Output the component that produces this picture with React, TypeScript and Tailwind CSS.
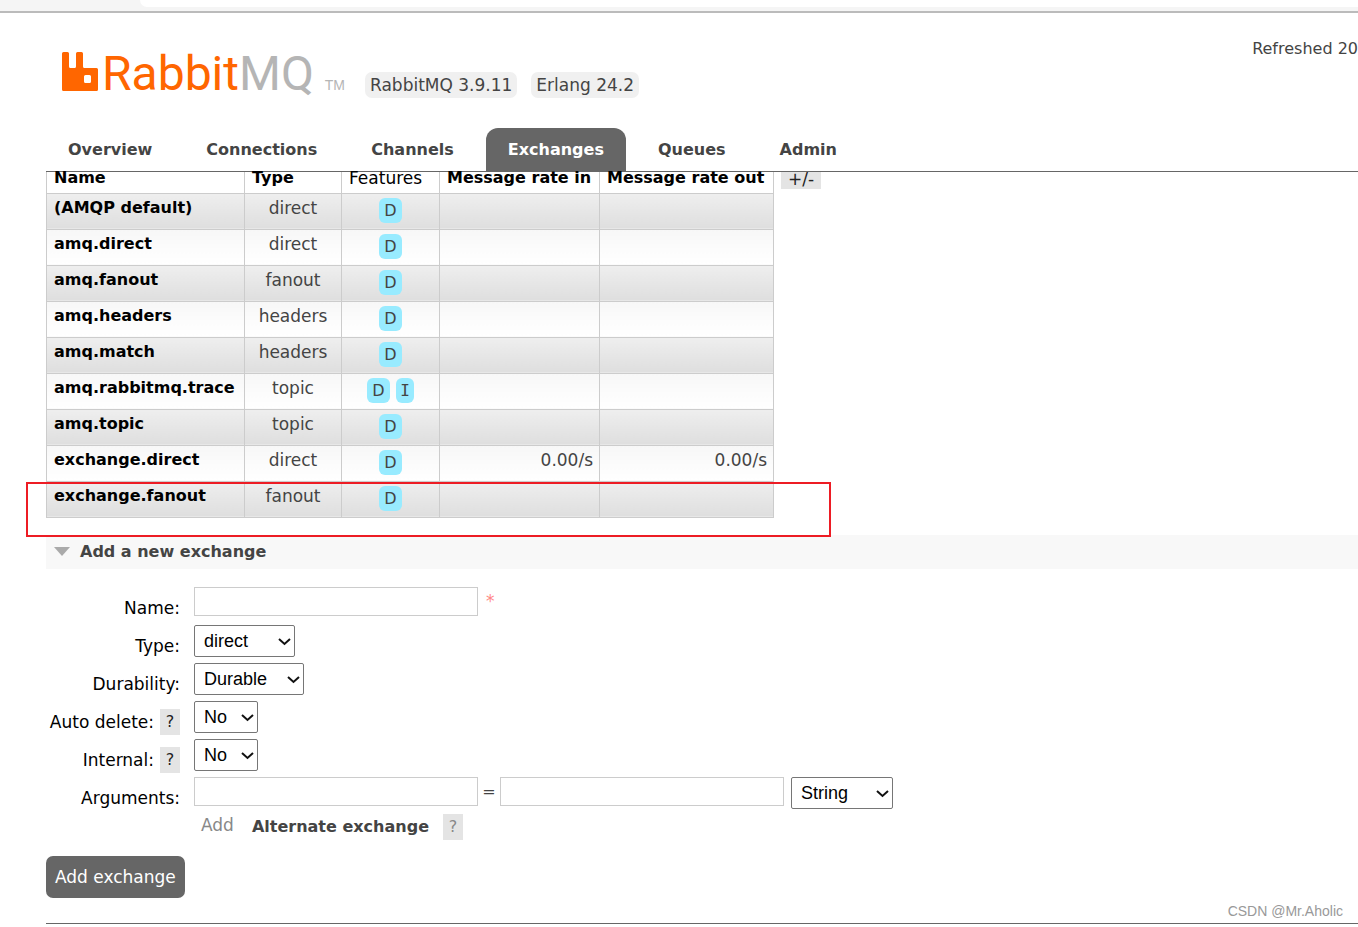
import type { ReactNode } from "react";
import { clsx } from "clsx";

const tabs = ["Overview", "Connections", "Channels", "Exchanges", "Queues", "Admin"];

const exchanges = [
	{ name: "(AMQP default)", type: "direct", features: ["D"], rate: "" },
	{ name: "amq.direct", type: "direct", features: ["D"], rate: "" },
	{ name: "amq.fanout", type: "fanout", features: ["D"], rate: "" },
	{ name: "amq.headers", type: "headers", features: ["D"], rate: "" },
	{ name: "amq.match", type: "headers", features: ["D"], rate: "" },
	{ name: "amq.rabbitmq.trace", type: "topic", features: ["D", "I"], rate: "" },
	{ name: "amq.topic", type: "topic", features: ["D"], rate: "" },
	{ name: "exchange.direct", type: "direct", features: ["D"], rate: "0.00/s" },
	{ name: "exchange.fanout", type: "fanout", features: ["D"], rate: "" },
];

const Logo = () => (
	<a href="#" aria-label="RabbitMQ" className="flex h-10 w-[283px] shrink-0 items-start">
		<svg width="36" height="39" viewBox="0 0 36 39" className="mt-px shrink-0" aria-hidden="true">
			<path
				fill="#f60"
				fillRule="evenodd"
				d="M1.500 0h4a1.500 1.500 0 0 1 1.500 1.500v13a1.500 1.500 0 0 0 1.500 1.500h4a1.500 1.500 0 0 0 1.500-1.500v-13a1.500 1.500 0 0 1 1.500-1.500h4a1.500 1.500 0 0 1 1.500 1.500v13a1.500 1.500 0 0 0 1.500 1.500h12a1.500 1.500 0 0 1 1.500 1.500v20a1.500 1.500 0 0 1-1.500 1.500h-33a1.500 1.500 0 0 1-1.500-1.500v-36a1.500 1.500 0 0 1 1.500-1.500zM23.500 23a1.500 1.500 0 0 0-1.500 1.500v5a1.500 1.500 0 0 0 1.500 1.500h4a1.500 1.500 0 0 0 1.500-1.500v-5a1.500 1.500 0 0 0-1.500-1.500z"
			/>
		</svg>
		<span className="ml-1 flex flex-1 items-baseline font-['Roboto',sans-serif] text-[48px] leading-[46px] font-normal text-[#f60]">
			Rabbit
			<span className="text-[#b5b5b5]">MQ</span>
			<span className="ml-auto font-['Liberation_Sans',sans-serif] text-[14px] text-[#b5b5b5]">TM</span>
		</span>
	</a>
);

const Help = ({ label, muted }: { label: string; muted?: boolean }) => (
	<button
		type="button"
		aria-label={label}
		className={clsx("h-[26px] w-5 bg-[#e4e4e4] text-[16px]", muted ? "text-[#888]" : "text-[#222]")}
	>
		?
	</button>
);

const Select = ({ id, label, options, width }: { id: string; label?: string; options: string[]; width: string }) => (
	<div className={clsx("relative", width)}>
		<select
			id={id}
			aria-label={label}
			className="h-8 w-full appearance-none rounded-[2px] border border-[#767676] bg-white pl-[9px] font-['Liberation_Sans',Arial,sans-serif] text-[18px] text-black"
		>
			{options.map((option) => (
				<option key={option}>{option}</option>
			))}
		</select>
		<svg
			className="pointer-events-none absolute top-3 right-1"
			width="13"
			height="9"
			viewBox="0 0 13 9"
			fill="none"
			stroke="#111"
			strokeWidth="2"
			aria-hidden="true"
		>
			<path d="M1 2l5.500 5L12 2" />
		</svg>
	</div>
);

const TextInput = ({ id, label }: { id: string; label?: string }) => (
	<input id={id} aria-label={label} type="text" className="h-[29px] w-[284px] border border-[#ccc] px-1" />
);

const Row = ({ id, label, help, children }: { id: string; label: string; help?: boolean; children: ReactNode }) => (
	<div className="mb-1.5 flex h-8">
		<div className="mr-3.5 flex w-[134px] shrink-0 items-center justify-end gap-1.5 pt-2.5 text-black">
			<label htmlFor={id} className="whitespace-nowrap">
				{label}:
			</label>
			{help && <Help label={`Help for ${label}`} />}
		</div>
		{children}
	</div>
);

const ExchangeTable = () => (
	<table className="w-[727px] shrink-0 table-fixed border-collapse">
		<colgroup>
			<col className="w-[198px]" />
			<col className="w-[97px]" />
			<col className="w-[98px]" />
			<col className="w-[160px]" />
			<col className="w-[174px]" />
		</colgroup>
		<thead>
			<tr className="h-[21px] text-left align-top text-[16px] leading-3 whitespace-nowrap text-black [&>th]:border [&>th]:border-t-0 [&>th]:border-[#ccc] [&>th]:px-[7px]">
				<th>Name</th>
				<th>Type</th>
				<th className="text-[17px] font-normal">Features</th>
				<th>Message rate in</th>
				<th>Message rate out</th>
			</tr>
		</thead>
		<tbody>
			{exchanges.map((exchange) => (
				<tr
					key={exchange.name}
					className="h-9 align-top leading-5 [&>td]:border [&>td]:border-[#ccc] [&>td]:bg-linear-to-b [&>td]:px-1.5 [&>td]:pt-1 odd:[&>td]:from-[#efefef] odd:[&>td]:to-[#dedede] even:[&>td]:from-[#f7f7f7] even:[&>td]:to-white"
				>
					<td className="whitespace-nowrap">
						<a href="#" className="ml-px block text-[16px] font-bold text-black">
							{exchange.name}
						</a>
					</td>
					<td className="text-center">{exchange.type}</td>
					<td>
						<div className="flex justify-center gap-1.5">
							{exchange.features.map((feature) => (
								<span
									key={feature}
									className={clsx(
										"h-[25px] rounded-[6px] bg-[#98ebff] text-center text-[16px] leading-[26px]",
										feature === "I" ? "w-[18px] font-['DejaVu_Sans_Mono',monospace]" : "w-[23px]",
									)}
								>
									{feature}
								</span>
							))}
						</div>
					</td>
					<td className="text-right">{exchange.rate}</td>
					<td className="text-right">{exchange.rate}</td>
				</tr>
			))}
		</tbody>
	</table>
);

export default function App() {
	return (
		<div className="overflow-hidden bg-white font-['DejaVu_Sans',Verdana,sans-serif] text-[17px] leading-6 text-[#444]">
			<div className="h-[13px] border-b-2 border-[#bbb] bg-[#f5f5f5] pl-[140px]">
				<div className="h-[7px] rounded-bl-[14px] bg-white" />
			</div>

			<header className="flex items-start pt-[38px] pl-[62px]">
				<Logo />
				<div className="mt-[21px] ml-5 flex gap-3.5 whitespace-nowrap">
					<span className="rounded-[7px] bg-[#f0f0f0] px-[5px] leading-[26px]">RabbitMQ 3.9.11</span>
					<span className="rounded-[7px] bg-[#f0f0f0] px-[5px] leading-[26px]">Erlang 24.2</span>
				</div>
				<p className="-mt-3.5 ml-auto shrink-0 text-[16px] whitespace-nowrap">Refreshed 20</p>
			</header>

			<main className="pl-[46px]">
				<nav className="mt-[30px] flex gap-2.5 border-b border-[#666]">
					{tabs.map((tab) => (
						<a
							key={tab}
							href="#"
							className={clsx(
								"h-[43px] rounded-t-xl px-[22px] text-[16px] leading-[43px] font-bold",
								tab === "Exchanges" && "bg-[#666] text-white",
							)}
						>
							{tab}
						</a>
					))}
				</nav>

				<section className="relative flex items-start">
					<ExchangeTable />
					<button type="button" className="ml-[7px] h-[17px] w-10 bg-[#e4e4e4] pb-1 leading-3 text-[#222]">
						+/-
					</button>
					<div className="pointer-events-none absolute top-[310px] -left-5 h-[55px] w-[805px] border-2 border-[#ed1c24]" />
				</section>

				<h2 className="mt-[17px]">
					<button
						type="button"
						className="flex h-[34px] w-full items-center gap-2.5 bg-[#f8f8f8] pl-2 text-[16px] font-bold"
					>
						<svg width="16" height="9" viewBox="0 0 16 9" fill="#aaa" aria-hidden="true">
							<path d="M0 0h16L8 9z" />
						</svg>
						Add a new exchange
					</button>
				</h2>

				<form className="pt-[18px]" onSubmit={(e) => e.preventDefault()}>
					<Row id="name" label="Name">
						<TextInput id="name" />
						<span className="ml-2 leading-7 text-[#f88]">*</span>
					</Row>
					<Row id="type" label="Type">
						<Select id="type" options={["direct", "fanout", "headers", "topic"]} width="w-[101px]" />
					</Row>
					<Row id="durability" label="Durability">
						<Select id="durability" options={["Durable", "Transient"]} width="w-[110px]" />
					</Row>
					<Row id="auto-delete" label="Auto delete" help>
						<Select id="auto-delete" options={["No", "Yes"]} width="w-16" />
					</Row>
					<Row id="internal" label="Internal" help>
						<Select id="internal" options={["No", "Yes"]} width="w-16" />
					</Row>
					<Row id="arguments" label="Arguments">
						<TextInput id="arguments" />
						<span className="w-[22px] text-center text-[16px] leading-[29px]">=</span>
						<TextInput id="argument-value" label="Argument value" />
						<div className="w-[7px]" />
						<Select
							id="argument-type"
							label="Argument type"
							options={["String", "Number", "Boolean", "List"]}
							width="w-[102px]"
						/>
					</Row>
					<div className="-mt-0.5 flex items-center pl-[155px]">
						<span className="mr-[18px] pb-1 text-[#888]">Add</span>
						<button type="button" className="mr-3.5 text-[16px] font-bold">
							Alternate exchange
						</button>
						<Help label="Help for Alternate exchange" muted />
					</div>
					<button type="submit" className="mt-[15px] h-[42px] rounded-[7px] bg-[#666] px-[9px] text-white">
						Add exchange
					</button>
				</form>

				<footer className="relative mt-[25px] h-1 border-t border-[#666]">
					<span className="absolute right-[15px] bottom-1 font-['Liberation_Sans',sans-serif] text-[14px] text-[#999]">
						CSDN @Mr.Aholic
					</span>
				</footer>
			</main>
		</div>
	);
}
